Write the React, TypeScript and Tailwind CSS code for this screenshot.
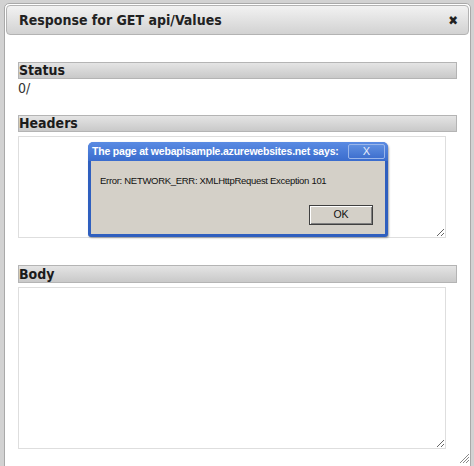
import React from "react";

function SectionBar({ label, className = "" }: { label: string; className?: string }) {
  return (
    <div
      className={
        "h-[17px] w-[439px] border border-[#b4b4b4] bg-gradient-to-b from-[#e4e4e4] to-[#c9c9c9] flex items-end pl-0 " +
        className
      }
    >
      <span className="text-[14px] font-bold leading-[15px] text-[#1b1b1b]">{label}</span>
    </div>
  );
}

export default function App() {
  return (
    <div
      className="relative w-[474px] h-[466px] overflow-hidden bg-[#d2d2d2] pl-[4px] pt-[3px] pr-[3px]"
      style={{ fontFamily: '"DejaVu Sans Condensed", "DejaVu Sans", Verdana, sans-serif' }}
    >
      <div className="h-[475px] bg-white border border-[#a9a9a9] rounded-t-[5px] p-[1px]">
        {/* title bar */}
        <div className="h-[30px] rounded-[4px] border border-[#b3b3b3] bg-gradient-to-b from-[#f2f2f2] to-[#d2d2d2] flex items-center justify-between pl-[12px] pr-[10px]">
          <span className="text-[14px] font-bold text-[#222]">Response for GET api/Values</span>
          <span className="text-[13px] font-bold text-[#222] leading-none">✖</span>
        </div>

        <div className="pl-[12px] pt-[27px]">
          <SectionBar label="Status" />
          <div className="text-[14px] leading-[16px] text-[#333] mt-[1px]">0/</div>

          <SectionBar label="Headers" className="mt-[19px]" />
          <textarea
            className="block mt-[4px] w-[428px] h-[102px] border border-[#dedede] bg-white outline-none"
            defaultValue=""
          />

          <SectionBar label="Body" className="mt-[27px] h-[18px]" />
          <textarea
            className="block mt-[4px] w-[428px] h-[162px] border border-[#dedede] bg-white outline-none"
            defaultValue=""
          />
        </div>
      </div>

      {/* resize grip of dialog */}
      <svg className="absolute left-[458px] top-[452px]" width="12" height="12" viewBox="0 0 12 12">
        <path d="M11 2 L2 11 M11 5 L5 11 M11 8 L8 11" stroke="#8a8a8a" strokeWidth="1" />
      </svg>

      {/* alert dialog */}
      <div
        className="absolute left-[88px] top-[142px] w-[300px] h-[95px] rounded-t-[6px] rounded-b-[3px] bg-[#2f5fbf] p-[3px] pt-0 flex flex-col shadow-[1px_1px_2px_rgba(0,0,0,0.35)]"
        style={{ fontFamily: '"Liberation Sans", Arial, sans-serif' }}
      >
        <div className="h-[19px] flex items-center justify-between rounded-t-[5px] bg-gradient-to-b from-[#5a8be3] to-[#3a6ccd] -mx-[3px] pl-[4px] pr-[3px]">
          <span className="whitespace-nowrap text-[10.5px] font-bold text-white tracking-[-0.2px]">
            The page at webapisample.azurewebsites.net says:
          </span>
          <div className="w-[37px] h-[15px] mt-[-1px] rounded-[2px] border border-[#9ab6ea] bg-gradient-to-b from-[#5f8fe0] to-[#3f70cf] flex items-center justify-center text-[11px] text-[#e8eefb]">
            X
          </div>
        </div>
        <div className="flex-1 bg-[#d4d0c8] flex flex-col px-[9px]">
          <div className="whitespace-nowrap text-[9.5px] text-[#111] mt-[13px] tracking-[-0.3px]">
            Error: NETWORK_ERR: XMLHttpRequest Exception 101
          </div>
          <div className="flex justify-end mt-[17px] pr-[3px]">
            <div className="w-[64px] h-[20px] border border-[#404040] bg-[#d4d0c8] shadow-[inset_1px_1px_0_#ffffff,inset_-1px_-1px_0_#808080] flex items-center justify-center text-[10.5px] text-[#111]">
              OK
            </div>
          </div>
        </div>
      </div>
    </div>
  );
}
